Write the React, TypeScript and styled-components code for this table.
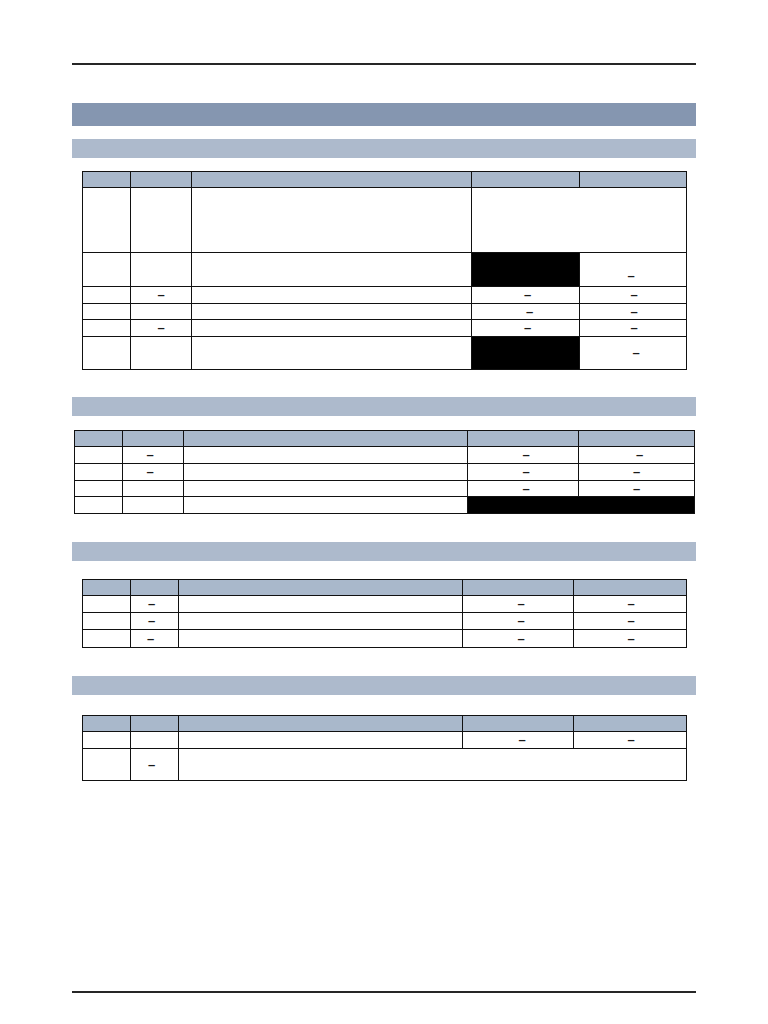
import * as React from "react"
import styled, { createGlobalStyle } from 'styled-components'

const Global = createGlobalStyle`
    body {
        margin: 0;
        background: #fff;
        font-family: "Liberation Sans", Arial, sans-serif;
    }
`

const Page = styled.div`
    width: 768px;
    height: 1024px;
    box-sizing: border-box;
    padding: 63px 72px 0 72px;
    display: flex;
    flex-direction: column;
`

const Rule = styled.div<{ $top?: number }>`
    height: 2px;
    background: #262626;
    margin-top: ${p => p.$top || 0}px;
`

const TitleBar = styled.div`
    height: 23px;
    background: #8596b0;
    margin-top: 38px;
`

const SectionBar = styled.div<{ $top: number }>`
    height: 19px;
    background: #adbacc;
    margin-top: ${p => p.$top}px;
`

const Table = styled.table<{ $top: number; $left: number; $width: number }>`
    border-collapse: collapse;
    table-layout: fixed;
    margin-top: ${p => p.$top}px;
    margin-left: ${p => p.$left}px;
    width: ${p => p.$width}px;
    font-size: 12px;
    color: #222;
`

const Head = styled.th`
    background: #a9b8cb;
    border: 1px solid #111;
    height: 15px;
    padding: 0;
`

const Cell = styled.td<{ $h: number; $black?: boolean; $valign?: string; $nudge?: number }>`
    border: 1px solid #111;
    height: ${p => p.$h}px;
    padding: 0 0 0 ${p => (p.$nudge || 0) > 0 ? (p.$nudge || 0) * 2 : 0}px;
    padding-right: ${p => (p.$nudge || 0) < 0 ? -(p.$nudge || 0) * 2 : 0}px;
    background: ${p => p.$black ? '#000' : '#fff'};
    text-align: center;
    vertical-align: ${p => p.$valign || 'middle'};
    line-height: 12px;
`

const Dash = styled.span`
    font-weight: bold;
    font-size: 13px;
    color: #1a1a1a;
`

const D = () => <Dash>–</Dash>

const Cols = ({ widths }: { widths: number[] }) => (
    <colgroup>
        {widths.map((w, i) => <col key={i} style={{ width: w }} />)}
    </colgroup>
)

const HeaderRow = () => (
    <tr>
        <Head /><Head /><Head /><Head /><Head />
    </tr>
)

const App = () => {
    return (
        <Page>
            <Global />
            <Rule />
            <TitleBar />
            <SectionBar $top={13} />

            <Table $top={13} $left={10} $width={604}>
                <Cols widths={[48, 61, 280, 108, 107]} />
                <thead><HeaderRow /></thead>
                <tbody>
                    <tr>
                        <Cell $h={64} /><Cell $h={64} /><Cell $h={64} />
                        <Cell $h={64} colSpan={2} />
                    </tr>
                    <tr>
                        <Cell $h={33} /><Cell $h={33} /><Cell $h={33} />
                        <Cell $h={33} $black />
                        <Cell $h={33} $valign="bottom" $nudge={-2}><div style={{ paddingBottom: 4 }}><D /></div></Cell>
                    </tr>
                    <tr>
                        <Cell $h={16} /><Cell $h={16}><D /></Cell><Cell $h={16} />
                        <Cell $h={16} $nudge={2}><D /></Cell><Cell $h={16} $nudge={1}><D /></Cell>
                    </tr>
                    <tr>
                        <Cell $h={15} /><Cell $h={15} /><Cell $h={15} />
                        <Cell $h={15} $nudge={4}><D /></Cell><Cell $h={15} $nudge={1}><D /></Cell>
                    </tr>
                    <tr>
                        <Cell $h={16} /><Cell $h={16}><D /></Cell><Cell $h={16} />
                        <Cell $h={16} $nudge={2}><D /></Cell><Cell $h={16} $nudge={1}><D /></Cell>
                    </tr>
                    <tr>
                        <Cell $h={32} /><Cell $h={32} /><Cell $h={32} />
                        <Cell $h={32} $black />
                        <Cell $h={32} $nudge={3}><D /></Cell>
                    </tr>
                </tbody>
            </Table>

            <SectionBar $top={27} />

            <Table $top={14} $left={2} $width={620}>
                <Cols widths={[48, 61, 284, 111, 116]} />
                <thead><HeaderRow /></thead>
                <tbody>
                    <tr>
                        <Cell $h={16} /><Cell $h={16} $nudge={-3}><D /></Cell><Cell $h={16} />
                        <Cell $h={16} $nudge={3}><D /></Cell><Cell $h={16} $nudge={3}><D /></Cell>
                    </tr>
                    <tr>
                        <Cell $h={16} /><Cell $h={16} $nudge={-3}><D /></Cell><Cell $h={16} />
                        <Cell $h={16} $nudge={3}><D /></Cell><Cell $h={16}><D /></Cell>
                    </tr>
                    <tr>
                        <Cell $h={15} /><Cell $h={15} /><Cell $h={15} />
                        <Cell $h={15} $nudge={3}><D /></Cell><Cell $h={15}><D /></Cell>
                    </tr>
                    <tr>
                        <Cell $h={16} /><Cell $h={16} /><Cell $h={16} />
                        <Cell $h={16} colSpan={2} $black />
                    </tr>
                </tbody>
            </Table>

            <SectionBar $top={28} />

            <Table $top={18} $left={10} $width={604}>
                <Cols widths={[48, 48, 284, 111, 113]} />
                <thead><HeaderRow /></thead>
                <tbody>
                    <tr>
                        <Cell $h={16} /><Cell $h={16} $nudge={-3}><D /></Cell><Cell $h={16} />
                        <Cell $h={16} $nudge={3}><D /></Cell><Cell $h={16} $nudge={1}><D /></Cell>
                    </tr>
                    <tr>
                        <Cell $h={16} /><Cell $h={16} $nudge={-3}><D /></Cell><Cell $h={16} />
                        <Cell $h={16} $nudge={3}><D /></Cell><Cell $h={16} $nudge={1}><D /></Cell>
                    </tr>
                    <tr>
                        <Cell $h={17} /><Cell $h={17} $nudge={-4}><D /></Cell><Cell $h={17} />
                        <Cell $h={17} $nudge={3}><D /></Cell><Cell $h={17} $nudge={1}><D /></Cell>
                    </tr>
                </tbody>
            </Table>

            <SectionBar $top={28} />

            <Table $top={20} $left={10} $width={604}>
                <Cols widths={[48, 48, 284, 111, 113]} />
                <thead><HeaderRow /></thead>
                <tbody>
                    <tr>
                        <Cell $h={16} /><Cell $h={16} /><Cell $h={16} />
                        <Cell $h={16} $nudge={4}><D /></Cell><Cell $h={16} $nudge={1}><D /></Cell>
                    </tr>
                    <tr>
                        <Cell $h={31} /><Cell $h={31} $nudge={-3}><D /></Cell>
                        <Cell $h={31} colSpan={3} />
                    </tr>
                </tbody>
            </Table>

            <Rule $top={210} />
        </Page>
    )
}

export default App
